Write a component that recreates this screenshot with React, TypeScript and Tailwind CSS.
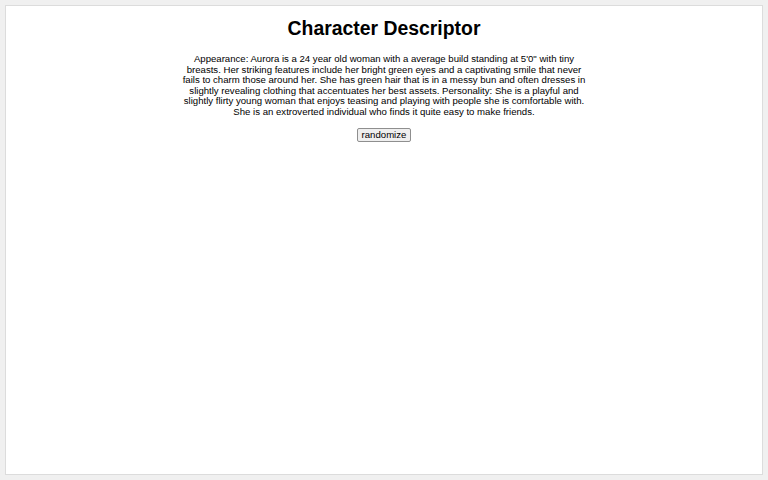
import { useState } from "react";

const descriptions = [
  "Appearance: Aurora is a 24 year old woman with a average build standing at 5'0\" with tiny breasts. Her striking features include her bright green eyes and a captivating smile that never fails to charm those around her. She has green hair that is in a messy bun and often dresses in slightly revealing clothing that accentuates her best assets. Personality: She is a playful and slightly flirty young woman that enjoys teasing and playing with people she is comfortable with. She is an extroverted individual who finds it quite easy to make friends.",
];

export default function App() {
  const [idx, setIdx] = useState(0);

  return (
    <div className="h-[480px] bg-[#f0f0f0] p-[5px] font-['Liberation_Sans',Arial,sans-serif] text-black">
      <div className="flex h-full flex-col items-center border border-[#dcdcdc] bg-white">
        <h1 className="mt-[10px] text-[19.4px] font-bold leading-[24px]">Character Descriptor</h1>
        <p className="mt-[14px] w-[404px] text-center text-[9.6px] leading-[10.6px]">
          {descriptions[idx]}
        </p>
        <button
          onClick={() => setIdx((idx + 1) % descriptions.length)}
          className="mt-[10px] rounded-[2px] border border-[#8f8f8f] bg-[#efefef] px-[4px] text-[9.6px] leading-[12px]"
        >
          randomize
        </button>
      </div>
    </div>
  );
}
